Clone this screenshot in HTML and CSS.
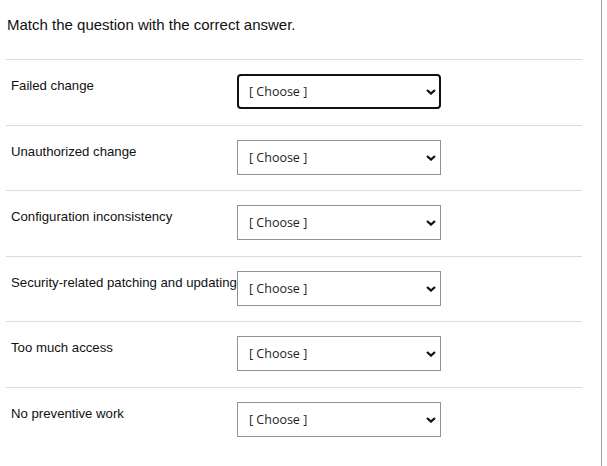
FILE: index.html
```html
<!DOCTYPE html>
<html lang="en">
<head>
<meta charset="utf-8">
<title>Matching question</title>
<link rel="stylesheet" href="styles.css">
</head>
<body>
<div class="frame">
  <div class="content">
    <p class="prompt">Match the question with the correct answer.</p>
    <div class="rows">
      <div class="row">
        <div class="label">Failed change</div>
        <div class="select-wrap">
          <select class="choice focused"><option>[ Choose ]</option></select>
          <svg class="chev" viewBox="0 0 10 6" width="10" height="6"><polyline points="1,1 5,4.6 9,1" fill="none" stroke="#111" stroke-width="2.2"/></svg>
        </div>
      </div>
      <div class="row">
        <div class="label">Unauthorized change</div>
        <div class="select-wrap">
          <select class="choice"><option>[ Choose ]</option></select>
          <svg class="chev" viewBox="0 0 10 6" width="10" height="6"><polyline points="1,1 5,4.6 9,1" fill="none" stroke="#111" stroke-width="2.2"/></svg>
        </div>
      </div>
      <div class="row">
        <div class="label">Configuration inconsistency</div>
        <div class="select-wrap">
          <select class="choice"><option>[ Choose ]</option></select>
          <svg class="chev" viewBox="0 0 10 6" width="10" height="6"><polyline points="1,1 5,4.6 9,1" fill="none" stroke="#111" stroke-width="2.2"/></svg>
        </div>
      </div>
      <div class="row">
        <div class="label">Security-related patching and updating</div>
        <div class="select-wrap">
          <select class="choice"><option>[ Choose ]</option></select>
          <svg class="chev" viewBox="0 0 10 6" width="10" height="6"><polyline points="1,1 5,4.6 9,1" fill="none" stroke="#111" stroke-width="2.2"/></svg>
        </div>
      </div>
      <div class="row">
        <div class="label">Too much access</div>
        <div class="select-wrap">
          <select class="choice"><option>[ Choose ]</option></select>
          <svg class="chev" viewBox="0 0 10 6" width="10" height="6"><polyline points="1,1 5,4.6 9,1" fill="none" stroke="#111" stroke-width="2.2"/></svg>
        </div>
      </div>
      <div class="row">
        <div class="label">No preventive work</div>
        <div class="select-wrap">
          <select class="choice"><option>[ Choose ]</option></select>
          <svg class="chev" viewBox="0 0 10 6" width="10" height="6"><polyline points="1,1 5,4.6 9,1" fill="none" stroke="#111" stroke-width="2.2"/></svg>
        </div>
      </div>
    </div>
  </div>
</div>
</body>
</html>
```

FILE: styles.css
```css
html, body {
  margin: 0;
  padding: 0;
  background: #fff;
}

body {
  font-family: "Liberation Sans", Arial, sans-serif;
  color: #111;
}

.frame {
  box-sizing: border-box;
  width: 602px;
  min-height: 100vh;
  border-right: 1px solid #a4a4a4;
}

.content {
  width: 576px;
  padding-left: 6px;
}

.prompt {
  margin: 0;
  padding: 16px 0 0 1px;
  height: 59px;
  box-sizing: border-box;
  font-size: 15px;
  line-height: 17px;
}

.rows {
  display: flex;
  flex-direction: column;
}

.row {
  display: flex;
  align-items: flex-start;
  box-sizing: border-box;
  height: 65.6px;
  border-top: 1px solid #dcdcdc;
  padding-top: 14px;
}

.label {
  width: 226px;
  padding-left: 5px;
  margin-top: 4px;
  font-size: 13.2px;
  line-height: 15px;
  color: #111;
  white-space: nowrap;
}

.select-wrap {
  position: relative;
  width: 204px;
  height: 35px;
}

.choice {
  appearance: none;
  -webkit-appearance: none;
  box-sizing: border-box;
  width: 204px;
  height: 35px;
  margin: 0;
  padding: 0 0 0 11px;
  border: 1px solid #8c939b;
  border-radius: 0;
  background: #fff;
  font-family: "Open Sans", "Noto Sans", sans-serif;
  font-size: 12.5px;
  color: #222;
  outline: none;
}

.choice.focused {
  border: 2px solid #111;
  border-radius: 4px;
  padding-left: 10px;
}

.chev {
  position: absolute;
  right: 5px;
  top: 15px;
  pointer-events: none;
}
```
